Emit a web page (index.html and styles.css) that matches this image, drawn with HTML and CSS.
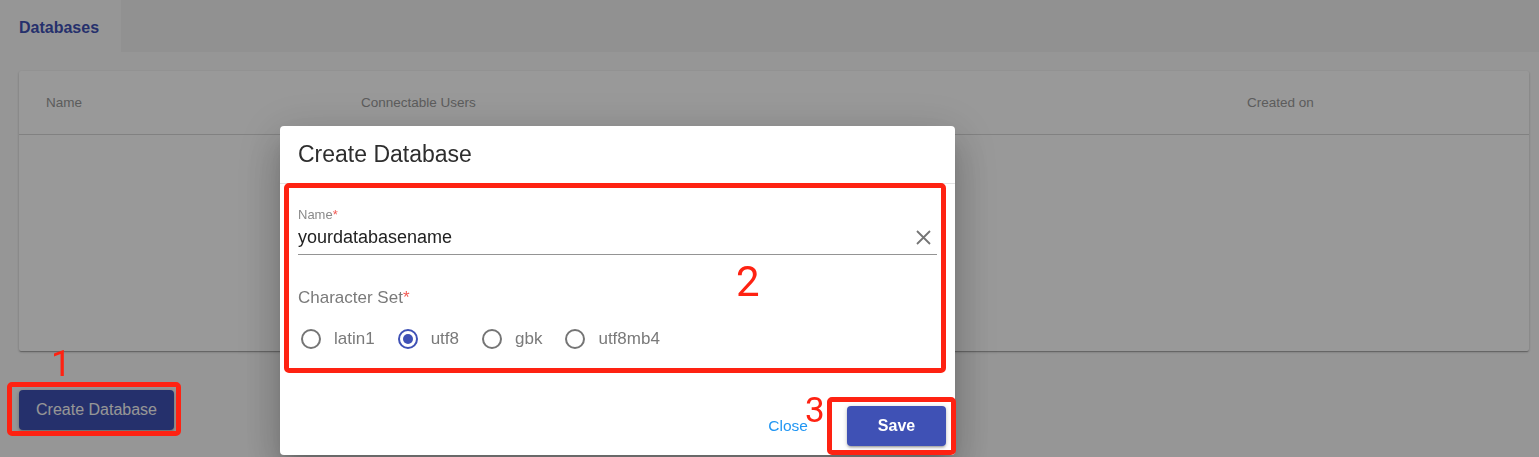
FILE: index.html
```html
<!DOCTYPE html>
<html lang="en">
<head>
<meta charset="utf-8">
<title>Databases</title>
<link rel="stylesheet" href="styles.css">
</head>
<body>
<div class="page">
  <div class="topbar">
    <div class="tab">Databases</div>
  </div>
  <main class="content">
    <section class="card">
      <div class="thead">
        <span>Name</span>
        <span>Connectable Users</span>
        <span>Created on</span>
      </div>
      <div class="tbody"></div>
    </section>
    <button class="btn-create">Create Database</button>
  </main>
</div>

<div class="backdrop"></div>

<div class="dialog">
  <div class="dialog-title">Create Database</div>
  <div class="dialog-body">
    <div class="field-label">Name<span class="req">*</span></div>
    <div class="input-row">
      <span class="input-text">yourdatabasename</span>
      <svg class="clear-icon" viewBox="0 0 15 15" width="15" height="15">
        <path d="M1 1 L14 14 M14 1 L1 14" stroke="#757575" stroke-width="1.8" fill="none"/>
      </svg>
    </div>
    <div class="group-label">Character Set<span class="req">*</span></div>
    <div class="radio-group">
      <label class="radio">
        <svg viewBox="0 0 20 20" width="20" height="20"><circle cx="10" cy="10" r="9" fill="none" stroke="#757575" stroke-width="2"/></svg>
        <span>latin1</span>
      </label>
      <label class="radio">
        <svg viewBox="0 0 20 20" width="20" height="20"><circle cx="10" cy="10" r="9" fill="none" stroke="#3f51b5" stroke-width="2"/><circle cx="10" cy="10" r="5" fill="#3f51b5"/></svg>
        <span>utf8</span>
      </label>
      <label class="radio">
        <svg viewBox="0 0 20 20" width="20" height="20"><circle cx="10" cy="10" r="9" fill="none" stroke="#757575" stroke-width="2"/></svg>
        <span>gbk</span>
      </label>
      <label class="radio">
        <svg viewBox="0 0 20 20" width="20" height="20"><circle cx="10" cy="10" r="9" fill="none" stroke="#757575" stroke-width="2"/></svg>
        <span>utf8mb4</span>
      </label>
    </div>
  </div>
  <div class="dialog-footer">
    <span class="btn-close">Close</span>
    <button class="btn-save">Save</button>
  </div>
</div>

<div class="mark mark-1"></div>
<div class="mark mark-2"></div>
<div class="mark mark-3"></div>
<div class="num num-1">1</div>
<div class="num num-2">2</div>
<div class="num num-3">3</div>
</body>
</html>
```

FILE: styles.css
```css
html, body {
  margin: 0;
  padding: 0;
}
body {
  width: 1539px;
  height: 457px;
  overflow: hidden;
  font-family: "Liberation Sans", Arial, sans-serif;
  background: #fbfbfb;
}
.page {
  height: 457px;
  background: #fbfbfb;
}
.topbar {
  height: 52px;
  background: #f2f2f2;
  display: flex;
}
.tab {
  width: 121px;
  height: 52px;
  background: #fbfbfb;
  box-sizing: border-box;
  padding: 2px 0 0 19px;
  line-height: 52px;
  font-size: 16px;
  font-weight: bold;
  color: #3f51b5;
}
.content {
  padding: 19px 10px 0 19px;
}
.card {
  height: 280px;
  background: #fff;
  border-radius: 2px;
  box-shadow: 0 1px 3px rgba(0,0,0,0.2), 0 1px 1px rgba(0,0,0,0.14), 0 2px 1px -1px rgba(0,0,0,0.12);
}
.thead {
  height: 63px;
  border-bottom: 1px solid #d8d8d8;
  display: grid;
  grid-template-columns: 315px 886px 1fr;
  align-items: center;
  padding-left: 27px;
  font-size: 13.5px;
  line-height: 60px;
  color: #9a9a9a;
}
.btn-create {
  margin-top: 39px;
  width: 155px;
  height: 40px;
  border: none;
  border-radius: 4px;
  background: #3f51b5;
  color: #fafafa;
  font-family: "Liberation Sans", Arial, sans-serif;
  font-size: 16px;
  padding: 0;
  box-shadow: 0 1px 5px rgba(0,0,0,0.2), 0 2px 2px rgba(0,0,0,0.14);
}
.backdrop {
  position: fixed;
  inset: 0;
  background: rgba(0,0,0,0.4);
}
.dialog {
  position: fixed;
  left: 280px;
  top: 126px;
  width: 675px;
  height: 329px;
  background: #fff;
  border-radius: 4px;
  display: flex;
  flex-direction: column;
  box-shadow: 0 11px 15px -7px rgba(0,0,0,0.2), 0 24px 38px 3px rgba(0,0,0,0.14), 0 9px 46px 8px rgba(0,0,0,0.12);
}
.dialog-title {
  height: 57px;
  line-height: 57px;
  padding-left: 18px;
  font-size: 23px;
  color: #2e2e2e;
  border-bottom: 1px solid #e3e3e3;
}
.dialog-body {
  padding: 23px 18px 0 18px;
}
.field-label {
  font-size: 13px;
  line-height: 16px;
  color: #8a8a8a;
}
.req {
  color: #f25b55;
}
.input-row {
  height: 29px;
  padding-bottom: 2px;
  border-bottom: 1px solid #949494;
  display: flex;
  align-items: center;
}
.input-text {
  flex: 1;
  font-size: 18px;
  line-height: 29px;
  color: #222;
}
.clear-icon {
  margin-right: 6px;
}
.group-label {
  margin-top: 33px;
  font-size: 17px;
  line-height: 20px;
  color: #7a7a7a;
}
.radio-group {
  margin-top: 19px;
  height: 24px;
  display: flex;
  align-items: center;
  gap: 23px;
  padding-left: 3px;
}
.radio {
  display: flex;
  align-items: center;
  gap: 13px;
  font-size: 17px;
  line-height: 20px;
  color: #7a7a7a;
}
.dialog-footer {
  margin-top: auto;
  display: flex;
  justify-content: flex-end;
  align-items: center;
  padding: 0 9px 9px 0;
}
.btn-close {
  font-size: 15.5px;
  color: #2196f3;
  margin-right: 39px;
}
.btn-save {
  width: 99px;
  height: 40px;
  border: none;
  border-radius: 4px;
  background: #3f51b5;
  color: #fff;
  font-family: "Liberation Sans", Arial, sans-serif;
  font-size: 16px;
  font-weight: bold;
  padding: 0;
  box-shadow: 0 1px 5px rgba(0,0,0,0.2), 0 2px 2px rgba(0,0,0,0.14), 0 3px 1px -2px rgba(0,0,0,0.12);
}
.mark {
  position: fixed;
  border: 5px solid #fe2212;
  border-radius: 5px;
  box-sizing: border-box;
}
.mark-1 { left: 7px; top: 382px; width: 174px; height: 54px; }
.mark-2 { left: 284px; top: 183px; width: 662px; height: 190px; }
.mark-3 { left: 827px; top: 397px; width: 129px; height: 58px; }
.num {
  position: fixed;
  font-family: Roboto, "Liberation Sans", sans-serif;
  font-weight: 400;
  line-height: 1;
  color: #fe2212;
}
.num-1 { left: 51px; top: 346px; font-size: 36px; }
.num-2 { left: 736px; top: 261px; font-size: 42px; }
.num-3 { left: 805px; top: 393px; font-size: 35px; }
```
